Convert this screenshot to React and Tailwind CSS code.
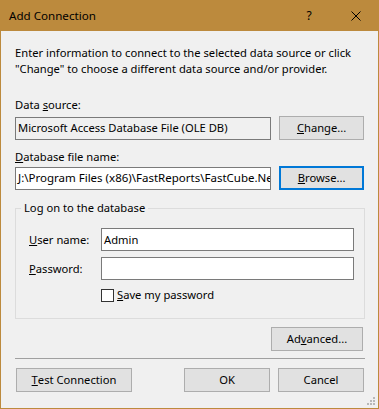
import React from 'react';

const font = { fontFamily: '"Segoe UI", "Noto Sans", sans-serif' };

function Btn({ children, className = '' }) {
  return (
    <button className={`h-[24px] bg-[#e1e1e1] border border-[#adadad] text-[11.2px] text-black flex items-center justify-center ${className}`}>
      {children}
    </button>
  );
}

export default function App() {
  return (
    <div className="w-[379px] h-[409px] flex flex-col bg-[#f0f0f0] border-x border-b border-[#bc8a3d] text-[11.2px] leading-[16px] text-black" style={font}>
      {/* title bar */}
      <div className="h-[31px] shrink-0 bg-[#bc8a3d] -mx-px flex items-center pl-[9px]">
        <span className="flex-1 text-[11.6px]">Add Connection</span>
        <span className="w-[46px] text-center text-[12px] mr-[1px]">?</span>
        <div className="w-[46px] h-[31px] flex items-center justify-center">
          <svg width="10" height="10" viewBox="0 0 10 10">
            <path d="M0.5 0.5 L9.5 9.5 M9.5 0.5 L0.5 9.5" stroke="#000" strokeWidth="1" fill="none" />
          </svg>
        </div>
      </div>

      <div className="flex-1 flex flex-col px-[14px] relative">
        <p className="mt-[14px] whitespace-nowrap">
          Enter information to connect to the selected data source or click<br />
          "Change" to choose a different data source and/or provider.
        </p>

        <div className="mt-[20px]">Data <u>s</u>ource:</div>
        <div className="mt-[3px] flex items-center gap-[8px]">
          <div className="w-[257px] h-[23px] border border-[#7a7a7a] bg-[#f0f0f0] pl-[2px] flex items-center whitespace-nowrap overflow-hidden">
            Microsoft Access Database File (OLE DB)
          </div>
          <Btn className="w-[85px]"><u>C</u>hange...</Btn>
        </div>

        <div className="mt-[9px]"><u>D</u>atabase file name:</div>
        <div className="mt-[1px] flex items-center gap-[8px]">
          <div className="w-[257px] h-[23px] border border-[#7a7a7a] bg-white pl-[2px] flex items-center whitespace-nowrap overflow-hidden text-[11.5px]">
            J:\Program Files (x86)\FastReports\FastCube.Net
          </div>
          <Btn className="w-[85px] !border-2 !border-[#0078d7]"><u>B</u>rowse...</Btn>
        </div>

        <fieldset className="mt-[10px] w-[350px] border border-[#dcdcdc]">
          <legend className="ml-[5px] px-[3px] leading-[16px]">Log on to the database</legend>
          <div className="pt-[12px] pb-[15px] pl-[13px]">
            <div className="flex items-center">
              <span className="w-[72px]"><u>U</u>ser name:</span>
              <div className="w-[253px] h-[23px] border border-[#7a7a7a] bg-white pl-[2px] flex items-center">Admin</div>
            </div>
            <div className="flex items-center mt-[6px]">
              <span className="w-[72px]"><u>P</u>assword:</span>
              <div className="w-[253px] h-[23px] border border-[#7a7a7a] bg-white" />
            </div>
            <div className="flex items-center mt-[7px] ml-[72px] h-[16px]">
              <span className="w-[13px] h-[13px] border border-[#333] bg-white" />
              <span className="ml-[3px]"><u>S</u>ave my password</span>
            </div>
          </div>
        </fieldset>

        <div className="mt-[8px] flex justify-end pr-[1px]">
          <Btn className="w-[92px]">Ad<u>v</u>anced...</Btn>
        </div>

        <div className="mt-[7px] h-px w-[350px] bg-[#a0a0a0]" />

        <div className="mt-[9px] flex items-center">
          <Btn className="w-[116px] ml-[1px]"><u>T</u>est Connection</Btn>
          <Btn className="w-[86px] ml-[52px]">OK</Btn>
          <Btn className="w-[86px] ml-[8px]">Cancel</Btn>
        </div>

        <svg className="absolute right-[2px] bottom-[2px]" width="10" height="10" viewBox="0 0 10 10">
          <g fill="#b8b8b8">
            <rect x="7" y="1" width="2" height="2" />
            <rect x="4" y="4" width="2" height="2" />
            <rect x="7" y="4" width="2" height="2" />
            <rect x="1" y="7" width="2" height="2" />
            <rect x="4" y="7" width="2" height="2" />
            <rect x="7" y="7" width="2" height="2" />
          </g>
        </svg>
      </div>
    </div>
  );
}
